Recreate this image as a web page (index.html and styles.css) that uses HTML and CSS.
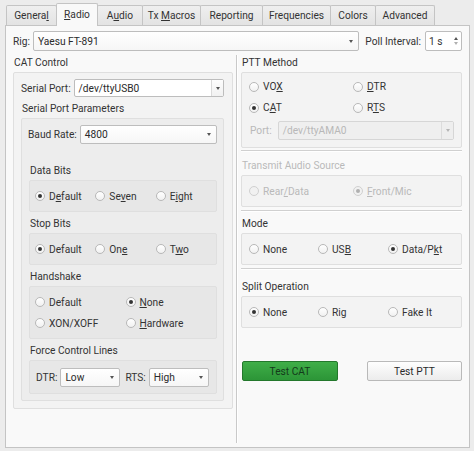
FILE: index.html
```html
<!DOCTYPE html>
<html>
<head>
<meta charset="utf-8">
<link rel="stylesheet" href="styles.css">
</head>
<body>
<div class="window">
  <div class="tabbar">
    <div class="tab t1"><span>Genera<u>l</u></span></div>
    <div class="tab t2 active"><span><u>R</u>adio</span></div>
    <div class="tab t3"><span>A<u>u</u>dio</span></div>
    <div class="tab t4"><span>Tx <u>M</u>acros</span></div>
    <div class="tab t5"><span>Reporting</span></div>
    <div class="tab t6"><span>Frequencies</span></div>
    <div class="tab t7"><span>Colors</span></div>
    <div class="tab t8"><span>Advanced</span></div>
  </div>
  <div class="panel">
    <div class="rigrow">
      <span class="lbl">Rig:</span>
      <div class="combo grow"><span class="val">Yaesu FT-891</span><span class="arrow"></span></div>
      <span class="lbl poll">Poll Interval:</span>
      <div class="spin"><span class="val">1 s</span><span class="spinbtns"><span class="up"></span><span class="down"></span></span></div>
    </div>
    <div class="columns">
      <div class="col left">
        <div class="gtitle">CAT Control</div>
        <div class="frame cat">
          <div class="row">
            <span class="lbl">Serial Port:</span>
            <div class="combo edit grow"><span class="val">/dev/ttyUSB0</span><span class="arrow"></span></div>
          </div>
          <div class="gtitle spp-title">Serial Port Parameters</div>
          <div class="frame spp">
            <div class="row baud">
              <span class="lbl">Baud Rate:</span>
              <div class="combo grow"><span class="val">4800</span><span class="arrow"></span></div>
            </div>
            <div class="sub first">
              <div class="gtitle">Data Bits</div>
              <div class="frame radios3">
                <label class="radio on"><i></i><span>D<u>e</u>fault</span></label>
                <label class="radio"><i></i><span>Se<u>v</u>en</span></label>
                <label class="radio"><i></i><span>E<u>i</u>ght</span></label>
              </div>
            </div>
            <div class="sub">
              <div class="gtitle">Stop Bits</div>
              <div class="frame radios3">
                <label class="radio on"><i></i><span>Default</span></label>
                <label class="radio"><i></i><span>On<u>e</u></span></label>
                <label class="radio"><i></i><span>T<u>w</u>o</span></label>
              </div>
            </div>
            <div class="sub">
              <div class="gtitle">Handshake</div>
              <div class="frame radios2">
                <label class="radio"><i></i><span>Default</span></label>
                <label class="radio on"><i></i><span><u>N</u>one</span></label>
                <label class="radio"><i></i><span>XON/XOFF</span></label>
                <label class="radio"><i></i><span><u>H</u>ardware</span></label>
              </div>
            </div>
            <div class="sub">
              <div class="gtitle">Force Control Lines</div>
              <div class="frame lines">
                <span class="lbl">DTR:</span>
                <div class="combo small"><span class="val">Low</span><span class="arrow"></span></div>
                <span class="lbl">RTS:</span>
                <div class="combo small"><span class="val">High</span><span class="arrow"></span></div>
              </div>
            </div>
          </div>
        </div>
      </div>
      <div class="vsep"></div>
      <div class="col right">
        <div class="gtitle">PTT Method</div>
        <div class="frame ptt">
          <div class="radios2 plain">
            <label class="radio"><i></i><span>VO<u>X</u></span></label>
            <label class="radio"><i></i><span><u>D</u>TR</span></label>
            <label class="radio on"><i></i><span>C<u>A</u>T</span></label>
            <label class="radio"><i></i><span>R<u>T</u>S</span></label>
          </div>
          <div class="row port">
            <span class="lbl dis">Port:</span>
            <div class="combo edit grow disabled"><span class="val">/dev/ttyAMA0</span><span class="arrow"></span></div>
          </div>
        </div>
        <div class="hsep s1"></div>
        <div class="gtitle dis tas">Transmit Audio Source</div>
        <div class="frame radios2 wide disabled">
          <label class="radio"><i></i><span>Rear<u>/</u>Data</span></label>
          <label class="radio on"><i></i><span><u>F</u>ront/Mic</span></label>
        </div>
        <div class="hsep s2"></div>
        <div class="gtitle mode">Mode</div>
        <div class="frame radios3 wide">
          <label class="radio"><i></i><span>None</span></label>
          <label class="radio"><i></i><span>US<u>B</u></span></label>
          <label class="radio on"><i></i><span>Data/P<u>k</u>t</span></label>
        </div>
        <div class="hsep s3"></div>
        <div class="gtitle split">Split Operation</div>
        <div class="frame radios3 wide">
          <label class="radio on"><i></i><span>None</span></label>
          <label class="radio"><i></i><span>Rig</span></label>
          <label class="radio"><i></i><span>Fake It</span></label>
        </div>
        <div class="buttons">
          <button class="btn green">Test CAT</button>
          <button class="btn">Test PTT</button>
        </div>
      </div>
    </div>
  </div>
</div>
</body>
</html>
```
FILE: styles.css
```css
* { box-sizing: border-box; }
html, body { margin: 0; padding: 0; }
body {
  background: #ececec;
  font-family: Roboto, "Noto Sans", sans-serif;
  font-size: 10.2px;
  color: #333333;
  width: 474px;
  height: 451px;
  overflow: hidden;
}
u { text-decoration: underline; text-underline-offset: 1px; }
.window { padding: 3px 4px 4px 5px; }

/* tabs */
.tabbar { display: flex; align-items: flex-end; height: 22px; padding-left: 1px; }
.tab {
  height: 20px;
  border: 1px solid #c4c4c4;
  border-bottom: none;
  border-radius: 2px 2px 0 0;
  background: linear-gradient(#efefef, #e3e3e3);
  margin-right: -1px;
  display: flex; align-items: center; justify-content: center;
  color: #333;
  position: relative;
  white-space: nowrap;
}
.tab.active {
  height: 23px;
  background: #f9f9f9;
  margin-bottom: -1px;
  z-index: 2;
  padding-bottom: 2px;
}
.t1 { width: 51px; } .t2 { width: 42px; } .t3 { width: 46px; } .t4 { width: 59px; }
.t5 { width: 63px; } .t6 { width: 69px; } .t7 { width: 46px; } .t8 { width: 60px; }

.panel {
  width: 465px; height: 423px;
  border: 1px solid #c4c4c4;
  background: #f9f9f9;
  padding: 5px 7px 4px 7px;
  display: flex; flex-direction: column;
  position: relative; z-index: 1;
}

.lbl { white-space: nowrap; }
.dis { color: #b9b9b9; }
.rigrow { display: flex; align-items: center; height: 20px; }
.rigrow .combo { height: 20px; margin-left: 3px; }
.rigrow .poll { margin-left: 6px; }
.grow { flex: 1; }

/* combos */
.combo {
  height: 19px;
  border: 1px solid #bdbdbd;
  border-radius: 2px;
  background: linear-gradient(#ffffff, #f6f6f6);
  display: flex; align-items: stretch;
  min-width: 0;
}
.combo .val { flex: 1; display: flex; align-items: center; padding-left: 4px; color: #2a2a2a; }
.combo .arrow {
  width: 14px; display: flex; align-items: center; justify-content: center;
}
.combo .arrow::after {
  content: ""; border-top: 3px solid #555; border-left: 2.5px solid transparent; border-right: 2.5px solid transparent;
}
.combo.edit { background: #fff; }
.combo.edit .arrow { width: 12px; border-left: 1px solid #dadada; background: linear-gradient(#fdfdfd,#f1f1f1); }
.combo.disabled { background: #efefef; border-color: #d6d6d6; }
.combo.disabled .val { color: #b8b8b8; }
.combo.disabled .arrow { background: #eeeeee; border-left-color: #dcdcdc; }
.combo.disabled .arrow::after { border-top-color: #b5b5b5; }

.spin {
  width: 37px; height: 20px; margin-left: 4px;
  border: 1px solid #bdbdbd; border-radius: 2px; background: #fff;
  display: flex;
}
.spin .val { flex: 1; display: flex; align-items: center; padding-left: 3px; }
.spinbtns { width: 10px; display: flex; flex-direction: column; align-items: center; justify-content: center; gap: 2px; }
.spinbtns .up { border-bottom: 3px solid #555; border-left: 2px solid transparent; border-right: 2px solid transparent; }
.spinbtns .down { border-top: 3px solid #b0b0b0; border-left: 2px solid transparent; border-right: 2px solid transparent; }

/* layout */
.columns { display: flex; flex: 1; margin-top: 4px; }
.col.left { width: 220px; }
.col.right { flex: 1; }
.vsep { width: 2px; margin: 0 3px; border-left: 1px solid #c9c9c9; background: #ffffff; height: 388px; }

.gtitle { height: 16px; line-height: 16px; padding-left: 1px; white-space: nowrap; }
.frame {
  margin-top: 1px;
  border: 1px solid #dfdfdf;
  border-radius: 2px;
  background: rgba(0,0,0,0.022);
}
.row { display: flex; align-items: center; gap: 3px; }

.cat { padding: 6px 8px 7px 7px; }
.cat > .row { height: 18px; }
.cat > .row .combo { height: 18px; }
.spp-title { margin-top: 4px; }
.spp { padding: 6px 6px 6px 7px; }
.baud { margin-left: -1px; height: 19px; }
.sub { margin-top: 4px; }
.sub.first { margin-top: 19px; }

.radio { display: flex; align-items: center; gap: 4px; white-space: nowrap; }
.radio i {
  width: 10px; height: 10px; border-radius: 50%;
  border: 1px solid #b8b8b8;
  background: linear-gradient(#ffffff, #f1f1f1);
  display: flex; align-items: center; justify-content: center;
  flex: none;
}
.radio.on i::after { content: ""; width: 4px; height: 4px; border-radius: 50%; background: #333; }
.disabled .radio { color: #b9b9b9; }
.disabled .radio i { border-color: #d0d0d0; background: #f1f1f1; }
.disabled .radio.on i::after { background: #b0b0b0; }

.radios3 { display: grid; grid-template-columns: repeat(3, 1fr); height: 32px; align-items: center; padding-left: 5px; }
.radios2 { display: grid; grid-template-columns: repeat(2, 1fr); padding-left: 5px; align-items: center; }
.frame.radios2 { height: 53px; grid-auto-rows: 21px; align-content: center; }
.lines { height: 34px; display: flex; align-items: center; padding: 0 7px 0 6px; gap: 3px; }
.lines .combo { width: 60px; }
.lines .lbl + .combo + .lbl { margin-left: 2px; }

/* right column */
.ptt { height: 76px; padding: 3px 7px 0 7px; }
.radios2.plain { padding-left: 0; grid-auto-rows: 21px; grid-template-columns: 104px 1fr; }
.port { margin-top: 3px; padding-left: 1px; }
.port .combo { margin-left: 3px; }
.frame.wide { padding-left: 7px; }
.frame.radios2.wide { height: 32px; grid-template-columns: 104px 1fr; }
.radios3.wide { grid-template-columns: 69px 70px 1fr; }
.hsep { height: 2px; border-top: 1px solid #d0d0d0; background: #fff; }
.s1 { margin-top: 2px; }
.tas { margin-top: 6px; }
.s2 { margin-top: 3px; }
.mode { margin-top: 4px; }
.s3 { margin-top: 3px; }
.split { margin-top: 9px; }
.buttons { display: flex; justify-content: space-between; margin-top: 33px; padding-left: 1px; }
.btn {
  font: inherit; height: 20px; width: 95px;
  border: 1px solid #b9b9b9; border-radius: 2px;
  background: linear-gradient(#fefefe, #ececec);
  color: #2a2a2a; padding: 0;
}
.btn.green {
  width: 96px;
  background: linear-gradient(#3fae48, #2c9537);
  border-color: #23782c;
  color: #133a1b;
}
```
